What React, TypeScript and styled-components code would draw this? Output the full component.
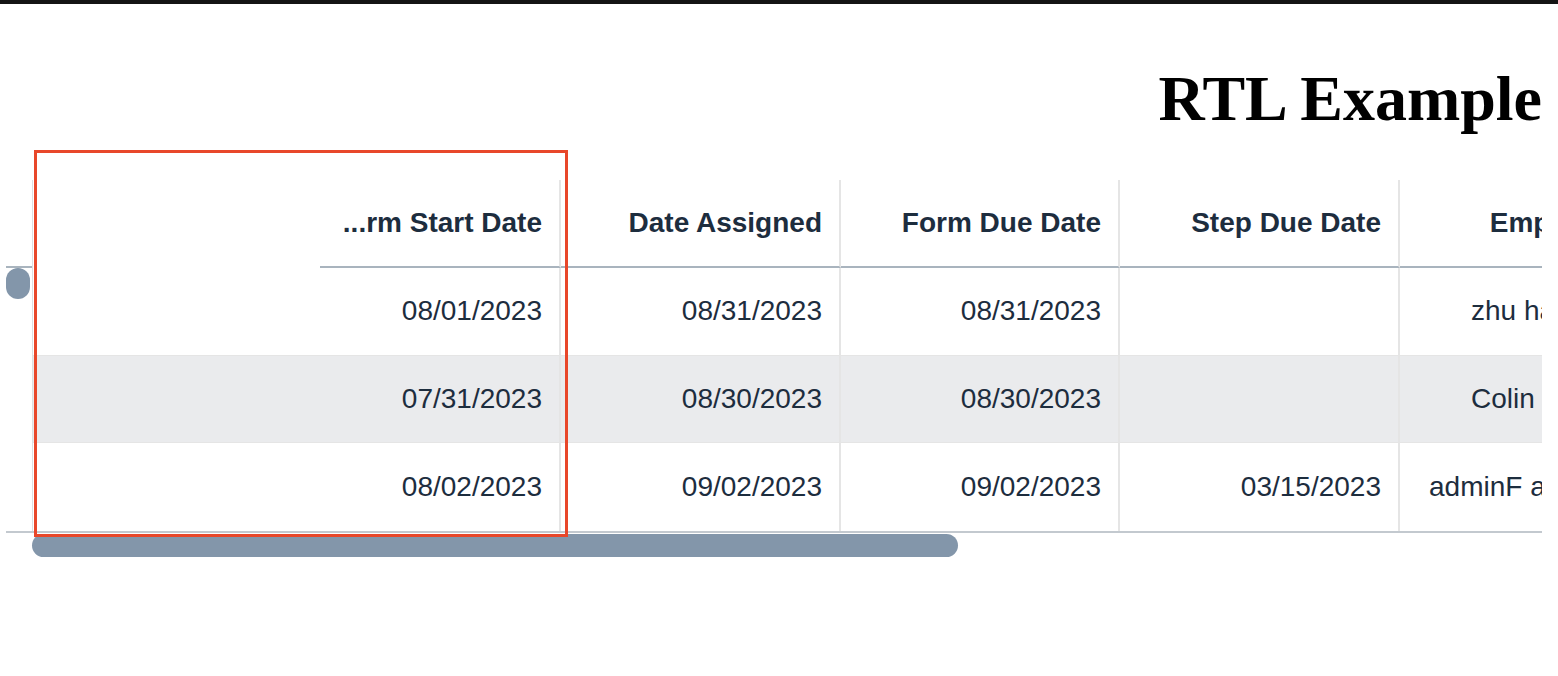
import React from "react";
import styled, { createGlobalStyle } from "styled-components";

const GlobalStyle = createGlobalStyle`
  html, body { margin: 0; padding: 0; background: #ffffff; }
  body { font-family: "Liberation Sans", Arial, sans-serif; }
  * { box-sizing: border-box; }
`;

const Page = styled.div`
  display: flex;
  flex-direction: column;
  width: 1558px;
  height: 676px;
  overflow: hidden;
  background: #ffffff;
`;

const TopBar = styled.div`
  height: 4px;
  background: #141414;
  flex: none;
`;

const Title = styled.h1`
  margin: 57.6px 16px 0 0;
  font-family: "Liberation Serif", "Times New Roman", serif;
  font-weight: 700;
  font-size: 64px;
  line-height: 73.5px;
  text-align: right;
  color: #000000;
`;

const TableSection = styled.section`
  position: relative;
  margin-top: 15px;
  padding: 30px 16px 0 6px;
`;

const Grid = styled.div`
  display: flex;
  border-bottom: 2px solid #c3c9cf;
`;

const Gutter = styled.div`
  width: 26px;
  flex: none;
  display: flex;
  flex-direction: column;
`;

const GutterHead = styled.div`
  height: 88px;
  border-bottom: 2px solid #a9b4be;
`;

const VThumb = styled.div`
  width: 24px;
  height: 31px;
  border-radius: 12px;
  background: #8396aa;
`;

const Body = styled.div`
  flex: 1;
  min-width: 0;
  overflow: hidden;
  border-left: 1px solid #dedfe1;
  display: flex;
  flex-direction: column;
`;

const Row = styled.div<{ $striped?: boolean }>`
  display: flex;
  height: 87.67px;
  background: ${(p) => (p.$striped ? "#eaebed" : "#ffffff")};
  border-bottom: 1px solid #e5e5e5;
  &:last-child { border-bottom: none; }
`;

const HeaderRow = styled.div`
  display: flex;
  height: 88px;
  background: #ffffff;
`;

const Blank = styled.div`
  width: 287px;
  flex: none;
`;

const Cell = styled.div<{ $w: number }>`
  width: ${(p) => p.$w}px;
  flex: none;
  display: flex;
  align-items: center;
  justify-content: flex-end;
  padding-right: 17px;
  border-right: 2px solid #e5e5e5;
  white-space: nowrap;
  overflow: hidden;
  font-size: 28px;
  color: #1d2d3e;
`;

const HeaderCell = styled(Cell)`
  font-weight: 700;
  border-bottom: 2px solid #a9b4be;
`;

const HScroll = styled.div`
  padding: 1px 0 0 26px;
`;

const HThumb = styled.div`
  width: 926px;
  height: 23px;
  border-radius: 12px;
  background: #8396aa;
`;

const FocusOutline = styled.div`
  position: absolute;
  left: 34px;
  top: 0;
  width: 534px;
  height: 387px;
  border: 3px solid #e8472a;
  pointer-events: none;
`;

const widths = [241, 280, 279, 280, 241];
const headers = ["...rm Start Date", "Date Assigned", "Form Due Date", "Step Due Date", "Employee"];
const rows = [
  ["08/01/2023", "08/31/2023", "08/31/2023", "", "zhu haiyang"],
  ["07/31/2023", "08/30/2023", "08/30/2023", "", "Colin Zhang"],
  ["08/02/2023", "09/02/2023", "09/02/2023", "03/15/2023", "adminF adminL"],
];

export default function App() {
  return (
    <>
      <GlobalStyle />
      <Page>
        <TopBar />
        <Title>RTL Example</Title>
        <TableSection>
          <Grid>
            <Gutter>
              <GutterHead />
              <VThumb />
            </Gutter>
            <Body>
              <HeaderRow>
                <Blank />
                {headers.map((h, i) => (
                  <HeaderCell key={i} $w={widths[i]}>
                    {h}
                  </HeaderCell>
                ))}
              </HeaderRow>
              {rows.map((r, ri) => (
                <Row key={ri} $striped={ri === 1}>
                  <Blank />
                  {r.map((c, ci) => (
                    <Cell key={ci} $w={widths[ci]}>
                      {c}
                    </Cell>
                  ))}
                </Row>
              ))}
            </Body>
          </Grid>
          <HScroll>
            <HThumb />
          </HScroll>
          <FocusOutline />
        </TableSection>
      </Page>
    </>
  );
}
